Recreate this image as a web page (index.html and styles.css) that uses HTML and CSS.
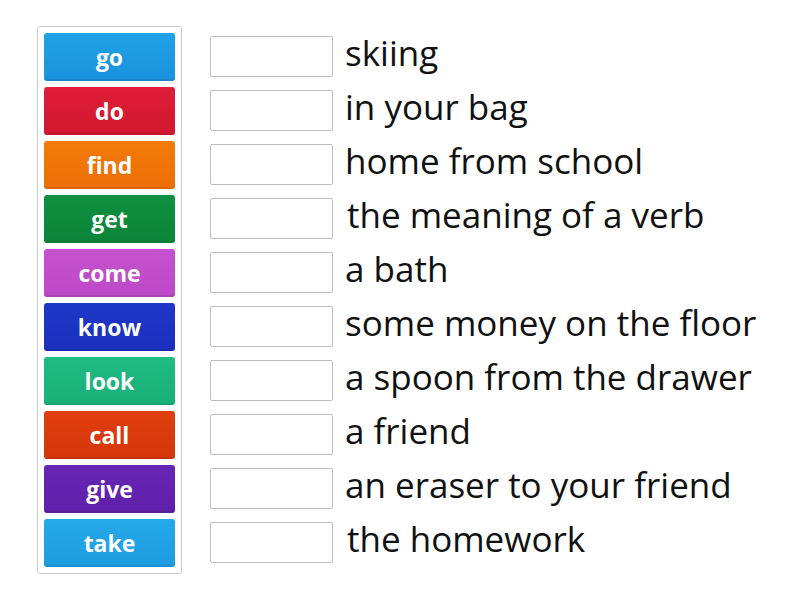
FILE: index.html
```html
<!DOCTYPE html>
<html>
<head>
<meta charset="utf-8">
<link rel="stylesheet" href="styles.css">
</head>
<body>
<div class="game">
  <div class="tiles">
    <div class="tile t-go">go</div>
    <div class="tile t-do">do</div>
    <div class="tile t-find">find</div>
    <div class="tile t-get">get</div>
    <div class="tile t-come">come</div>
    <div class="tile t-know">know</div>
    <div class="tile t-look">look</div>
    <div class="tile t-call">call</div>
    <div class="tile t-give">give</div>
    <div class="tile t-take">take</div>
  </div>
  <div class="rows">
    <div class="row"><div class="slot"></div><div class="phrase">skiing</div></div>
    <div class="row"><div class="slot"></div><div class="phrase">in your bag</div></div>
    <div class="row"><div class="slot"></div><div class="phrase">home from school</div></div>
    <div class="row"><div class="slot"></div><div class="phrase shift">the meaning of a verb</div></div>
    <div class="row"><div class="slot"></div><div class="phrase">a bath</div></div>
    <div class="row"><div class="slot"></div><div class="phrase">some money on the floor</div></div>
    <div class="row"><div class="slot"></div><div class="phrase">a spoon from the drawer</div></div>
    <div class="row"><div class="slot"></div><div class="phrase">a friend</div></div>
    <div class="row"><div class="slot"></div><div class="phrase">an eraser to your friend</div></div>
    <div class="row"><div class="slot"></div><div class="phrase shift">the homework</div></div>
  </div>
</div>
</body>
</html>
```
FILE: styles.css
```css
html, body {
  margin: 0;
  padding: 0;
  background: #fff;
}
body {
  font-family: "Open Sans", "Liberation Sans", sans-serif;
}
.game {
  display: flex;
  align-items: flex-start;
  padding: 26px 0 0 37px;
}
.tiles {
  display: flex;
  flex-direction: column;
  gap: 6px;
  padding: 6px;
  border: 1px solid #c9c9c9;
  border-radius: 3px;
  width: 131px;
}
.tile {
  height: 48px;
  border-radius: 3px;
  color: #fff;
  font-weight: 700;
  font-size: 23px;
  display: flex;
  align-items: center;
  justify-content: center;
  box-shadow: inset 0 -2px 0 rgba(0,0,0,0.08);
}
.t-go { background: linear-gradient(#20a2e8, #1992dc); }
.t-do { background: linear-gradient(#de1d38, #d2182f); }
.t-find { background: linear-gradient(#f47a0a, #ec6e05); }
.t-get { background: linear-gradient(#109040, #0b8438); }
.t-come { background: linear-gradient(#c652cf, #bd48c6); }
.t-know { background: linear-gradient(#1f37c8, #1a2fbe); }
.t-look { background: linear-gradient(#1ebb82, #19b078); }
.t-call { background: linear-gradient(#e03e0e, #d6360a); }
.t-give { background: linear-gradient(#6725b5, #5e20aa); }
.t-take { background: linear-gradient(#24a9ea, #1d9ce0); }
.rows {
  display: flex;
  flex-direction: column;
  gap: 6px;
  padding-top: 7px;
  margin-left: 28px;
}
.row {
  height: 48px;
  display: flex;
  align-items: flex-start;
}
.slot {
  width: 121px;
  height: 39px;
  margin-top: 3px;
  border: 1px solid #bdbdbd;
  border-radius: 2px;
  background: #fff;
  flex: none;
}
.phrase {
  margin-left: 12px;
  margin-top: -1px;
  font-size: 35px;
  line-height: 41px;
  color: #111;
  white-space: nowrap;
}
.phrase.shift {
  margin-left: 14px;
}
```
